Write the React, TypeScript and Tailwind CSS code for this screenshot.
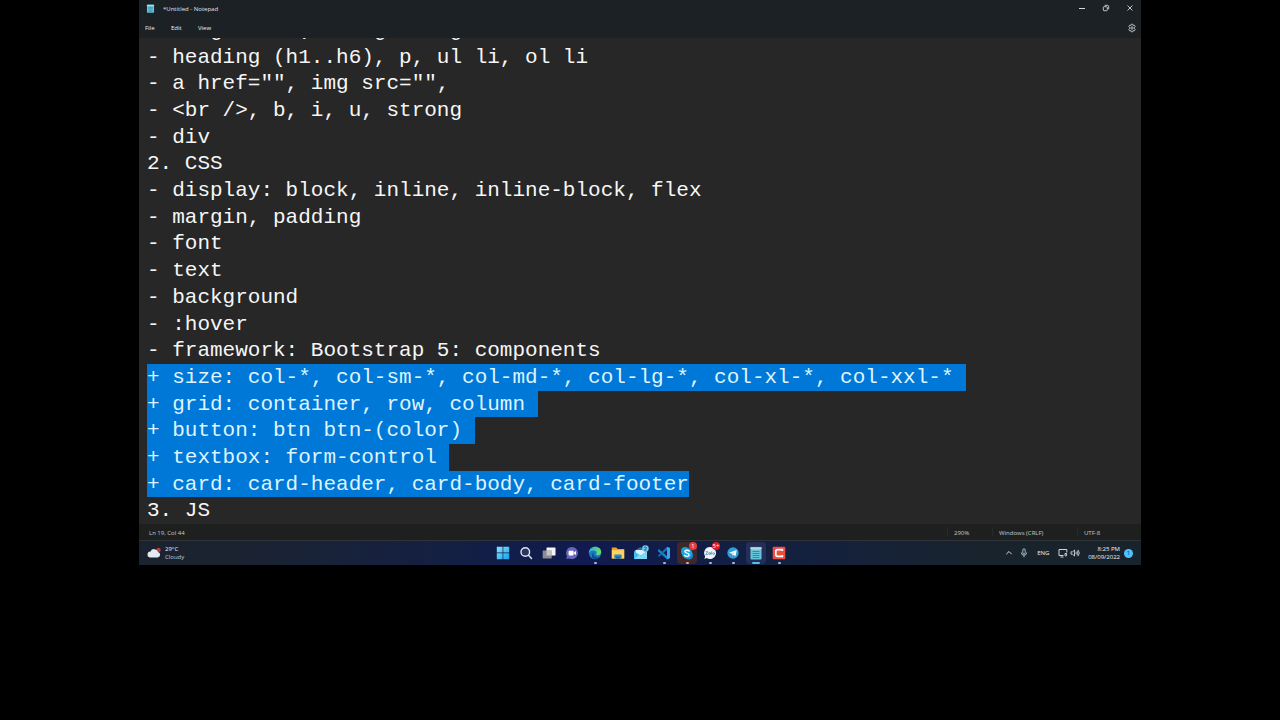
import React from "react";

type Line = { text: string; selected?: boolean; trailing?: boolean };

const lines: Line[] = [
  { text: "- <tag /> hoặc <tag></tag>" },
  { text: "- heading (h1..h6), p, ul li, ol li" },
  { text: '- a href="", img src="",' },
  { text: "- <br />, b, i, u, strong" },
  { text: "- div" },
  { text: "2. CSS" },
  { text: "- display: block, inline, inline-block, flex" },
  { text: "- margin, padding" },
  { text: "- font" },
  { text: "- text" },
  { text: "- background" },
  { text: "- :hover" },
  { text: "- framework: Bootstrap 5: components" },
  { text: "+ size: col-*, col-sm-*, col-md-*, col-lg-*, col-xl-*, col-xxl-*", selected: true, trailing: true },
  { text: "+ grid: container, row, column", selected: true, trailing: true },
  { text: "+ button: btn btn-(color)", selected: true, trailing: true },
  { text: "+ textbox: form-control", selected: true, trailing: true },
  { text: "+ card: card-header, card-body, card-footer", selected: true },
  { text: "3. JS" },
];

function NotepadIcon({ className }: { className: string }) {
  return (
    <svg viewBox="0 0 14 14" className={className} aria-hidden="true">
      <rect x="1.5" y="1" width="11" height="12.5" rx="1" fill="#67c5dc" />
      <rect x="1.5" y="1" width="11" height="2.2" rx="0.8" fill="#d9eef2" />
      <path d="M3.5 5.5h7M3.5 7.5h7M3.5 9.5h7M3.5 11.5h7" stroke="#247e9a" strokeWidth="0.8" />
      <path d="M3 .5v2M5 .5v2M7 .5v2M9 .5v2M11 .5v2" stroke="#367789" strokeWidth="0.7" />
    </svg>
  );
}

function WindowsIcon() {
  return (
    <svg viewBox="0 0 14 14" className="size-3.5" aria-hidden="true">
      <defs>
        <linearGradient id="win" x1="0" y1="0" x2="1" y2="1">
          <stop stopColor="#88e4ff" />
          <stop offset="1" stopColor="#14a2ed" />
        </linearGradient>
      </defs>
      <path d="M.8.8h5.8v5.8H.8zM7.3.8h5.9v5.8H7.3zM.8 7.3h5.8v5.9H.8zM7.3 7.3h5.9v5.9H7.3z" fill="url(#win)" />
    </svg>
  );
}

function SearchIcon() {
  return (
    <svg viewBox="0 0 14 14" className="size-3.5" fill="none" aria-hidden="true">
      <circle cx="6.3" cy="6" r="4.3" fill="#29375f" stroke="#dfe6ef" strokeWidth="1.4" />
      <path d="m9.5 9.3 3 3.1" stroke="#dfe6ef" strokeWidth="1.5" strokeLinecap="round" />
    </svg>
  );
}

function TaskViewIcon() {
  return (
    <svg viewBox="0 0 14 14" className="size-3.5" aria-hidden="true">
      <rect x="4.5" y="1.5" width="9" height="8" rx=".5" fill="#f5f5f4" />
      <rect x=".7" y="4.5" width="9" height="8" rx=".5" fill="#8b8c92" />
      <path d="M4.5 4.5h5.2v5H4.5z" fill="#c3c3c5" />
    </svg>
  );
}

function ChatIcon() {
  return (
    <svg viewBox="0 0 14 14" className="size-3.5" aria-hidden="true">
      <path d="M7 1a6 6 0 1 1-2.7 11.4L1.2 13l.8-2.8A6 6 0 0 1 7 1Z" fill="#6866b8" />
      <rect x="3.6" y="4.7" width="5" height="4.7" rx="1" fill="#fff" />
      <path d="m9 6.4 2-1.3v3.9L9 7.8Z" fill="#fff" />
    </svg>
  );
}

function EdgeIcon() {
  return (
    <svg viewBox="0 0 14 14" className="size-3.5" aria-hidden="true">
      <defs>
        <linearGradient id="edge" x1="0" y1="0" x2="1" y2=".3">
          <stop stopColor="#27a9df" />
          <stop offset="1" stopColor="#6bdc70" />
        </linearGradient>
      </defs>
      <circle cx="7" cy="7" r="6.2" fill="#167cc4" />
      <path d="M.8 7C1.2 3 3.8.8 7.2.8c3.6 0 6 2.5 6 5.2 0 2-1.5 3.2-3.3 3.2-1.5 0-2-.7-1.6-1.4C9.2 6 7.8 4.4 5.4 4.4 3.3 4.4 1.4 5.4.8 7Z" fill="url(#edge)" />
      <path d="M5.4 6.3c-.9 3.7 2.4 5.7 6.1 4.2C10.6 12 9 13.2 7 13.2 3.9 13 2.8 8.4 5.4 6.3Z" fill="#124b91" />
    </svg>
  );
}

function FolderIcon() {
  return (
    <svg viewBox="0 0 14 14" className="size-3.5" aria-hidden="true">
      <path d="M.8 1.5h4.5l1.3 1.5h6.6v9.5H.8Z" fill="#e9a52b" />
      <path d="M.8 4.2h12.4v8.3H.8Z" fill="#ffd262" />
      <path d="M3.3 12.6V9.4q0-1 1-1h5.4q1 0 1 1v3.2Z" fill="#2786cb" />
      <path d="M5 12.6v-1.8h4v1.8Z" fill="#1a5f9e" />
    </svg>
  );
}

function MailIcon() {
  return (
    <svg viewBox="0 0 16 16" className="size-4" aria-hidden="true">
      <path d="m1 6 6.5-4L14 6v8H1Z" fill="#1673b6" />
      <path d="M2.5 5h10v5h-10Z" fill="#d9f4ff" />
      <path d="m1 6.2 6.5 4.2L14 6.2V14H1Z" fill="#40bdf0" />
      <path d="m1 14 5.5-4.4L7.5 10.4 14 6.2V14Z" fill="#7cd9fb" />
      <circle cx="12.4" cy="3.5" r="3.3" fill="#75c9ed" />
      <path d="M11.2 2.7c.2-1.2 2.2-1.1 2.2.1 0 .8-1.2 1.4-2 2.3h2.2" fill="none" stroke="#174765" strokeWidth=".8" />
    </svg>
  );
}

function CodeIcon() {
  return (
    <svg viewBox="0 0 14 14" className="size-3.5" aria-hidden="true">
      <path d="M1 4.1 2 3.3 10 10v3.4L1 5.2Z" fill="#1687d0" />
      <path d="M1 9.8 10 .7V4L2 10.7l-1-.8Z" fill="#1474b8" />
      <path d="m10 .7 3 1.4v9.8l-3 1.5Z" fill="#32a9f0" />
    </svg>
  );
}

function SkypeIcon() {
  return (
    <svg viewBox="0 0 14 14" className="size-3.5" fill="none" aria-hidden="true">
      <circle cx="5" cy="5" r="4" fill="#139bdc" />
      <circle cx="9" cy="9.5" r="4" fill="#1683cc" />
      <circle cx="7" cy="7.3" r="5.2" fill="#18a8df" />
      <path d="M9.2 5.2C8.4 4 5 3.8 4.9 5.6 4.8 7.4 9.3 6.8 9.1 9 9 10.8 5.4 10.7 4.6 9.3" stroke="#fff" strokeWidth="1.4" strokeLinecap="round" />
    </svg>
  );
}

function ZaloIcon() {
  return (
    <svg viewBox="0 0 14 14" className="size-3.5" fill="none" aria-hidden="true">
      <path d="M7 1a6 6 0 1 1-3.3 11L1.3 13l.9-2.6A6 6 0 0 1 7 1Z" fill="#f1f5fb" />
      <path d="M2.7 5.7h2.1L2.7 8.6h2.2M7.4 6.6v2M7.3 7.5a.9.9 0 1 0-1.8 0 .9.9 0 0 0 1.8 0M8.7 5.3v3.4" stroke="#3a78bc" strokeWidth=".7" />
      <circle cx="10.7" cy="7.6" r=".9" stroke="#3a78bc" strokeWidth=".7" />
    </svg>
  );
}

function TelegramIcon() {
  return (
    <svg viewBox="0 0 14 14" className="size-3.5" aria-hidden="true">
      <circle cx="7" cy="7" r="5.7" fill="#2da0d8" />
      <path d="M3 6.8 10.7 4l-1.2 6.3-2.1-1.6-1.2 1-.1-1.9Z" fill="#fff" />
      <path d="m6.1 7.8 3.1-2.5-2.5 2.9-.5 1.5Z" fill="#91bed4" />
    </svg>
  );
}

function CamtasiaIcon() {
  return (
    <svg viewBox="0 0 14 14" className="size-3.5" fill="none" aria-hidden="true">
      <rect x=".7" y=".7" width="12.6" height="12.6" rx="1" fill="#f04b40" />
      <path d="M10.3 5V3.7H5.5Q3.8 3.7 3.8 5.4v3.2q0 1.7 1.7 1.7h4.8V9" stroke="#fff" strokeWidth="1.7" />
    </svg>
  );
}

function Badge({ children, className }: { children: string; className: string }) {
  return (
    <span className={`absolute top-0 right-0 flex h-2 min-w-2 items-center justify-center rounded-full text-[6px] leading-none text-white ${className}`}>
      {children}
    </span>
  );
}

type App = {
  name: string;
  icon: React.ReactNode;
  mark?: string;
  tile?: string;
  badge?: React.ReactNode;
};

const dot = "w-[3px] bg-[#b2b7c8]";

const apps: App[] = [
  { name: "Start", icon: <WindowsIcon /> },
  { name: "Search", icon: <SearchIcon /> },
  { name: "Task view", icon: <TaskViewIcon /> },
  { name: "Chat", icon: <ChatIcon /> },
  { name: "Edge", icon: <EdgeIcon />, mark: dot },
  { name: "File Explorer", icon: <FolderIcon /> },
  { name: "Mail", icon: <MailIcon /> },
  { name: "Visual Studio Code", icon: <CodeIcon />, mark: dot },
  {
    name: "Skype",
    icon: <SkypeIcon />,
    mark: "w-[3px] bg-[#ff9b91]",
    tile: "bg-[#402728]",
    badge: <Badge className="bg-[#e53d3d]">1</Badge>,
  },
  { name: "Zalo", icon: <ZaloIcon />, mark: dot, badge: <Badge className="bg-[#e01c25]">5+</Badge> },
  { name: "Telegram", icon: <TelegramIcon />, mark: dot },
  { name: "Notepad", icon: <NotepadIcon className="size-3.5" />, mark: "w-2 bg-[#59bce9]", tile: "bg-[#232f58]" },
  { name: "Camtasia", icon: <CamtasiaIcon />, mark: dot },
];

function TitleBar() {
  return (
    <header className="flex h-[17px] items-center bg-[#1c2125] pl-[7px]">
      <NotepadIcon className="size-[9px]" />
      <h1 className="pl-2 text-[6px] leading-4 text-[#e2e5e7]">*Untitled - Notepad</h1>
      <div className="ml-auto flex self-start text-[#d5d8da]">
        <button aria-label="Minimize" className="flex h-[15px] w-6 items-center justify-center">
          <svg viewBox="0 0 8 8" className="size-2" stroke="currentColor"><path d="M1 4.5h6" /></svg>
        </button>
        <button aria-label="Restore" className="flex h-[15px] w-6 items-center justify-center">
          <svg viewBox="0 0 8 8" className="size-2" fill="none" stroke="currentColor" strokeWidth=".9">
            <rect x="1.3" y="2.7" width="4" height="4" rx=".8" />
            <path d="M2.7 1.3h2.6q1.4 0 1.4 1.4v2.6" />
          </svg>
        </button>
        <button aria-label="Close" className="flex h-[15px] w-[23px] items-center justify-center">
          <svg viewBox="0 0 8 8" className="size-2" stroke="currentColor" strokeWidth=".9"><path d="m1.5 1.5 5 5m0-5-5 5" /></svg>
        </button>
      </div>
    </header>
  );
}

function MenuBar() {
  return (
    <nav className="flex h-[21px] items-center bg-[#1c2125] pr-1 pl-1.5 text-[6px] leading-2 text-[#f0f1f2]">
      <button className="w-[26px] text-left">File</button>
      <button className="w-[27px] text-left">Edit</button>
      <button>View</button>
      <button aria-label="Settings" className="ml-auto flex size-[10px] items-center justify-center">
        <svg viewBox="0 0 10 10" className="size-[10px]" fill="none" stroke="#c8cccf" strokeWidth=".9">
          <path d="m4.3 1.2h1.4l.4 1.2 1.2-.2.9 1.2-.7 1 .0 1.2.7 1-.9 1.2-1.2-.2-.4 1.2H4.3l-.4-1.2-1.2.2-.9-1.2.7-1V4.4l-.7-1 .9-1.2 1.2.2Z" />
          <circle cx="5" cy="5" r="1.2" />
        </svg>
      </button>
    </nav>
  );
}

function Editor() {
  return (
    <div
      role="textbox"
      aria-multiline="true"
      aria-label="Document text"
      tabIndex={0}
      className="flex h-[486px] flex-col justify-end overflow-hidden bg-[#272727] pl-2 font-['Liberation_Mono',monospace] text-[21px] leading-7 text-[#f6f6f6]"
    >
      <div className="grid h-[507px] shrink-0 auto-rows-[minmax(0,1fr)] justify-items-start">
        {lines.map((line) => (
          <div
            key={line.text}
            className={line.selected ? "bg-[#0078d7] whitespace-pre text-[#def4ff]" : "whitespace-pre"}
          >
            {line.text}
            {line.trailing ? " " : ""}
          </div>
        ))}
      </div>
    </div>
  );
}

function StatusBar() {
  return (
    <footer className="flex h-[17px] items-center border-b border-[#303438] bg-[#1e2020] text-[6px] leading-2 text-[#c8cacb]">
      <span className="pt-0.5 pl-2.5">Ln 19, Col 44</span>
      <span className="ml-auto w-[45px] border-l border-[#282a2a] pt-0.5 pl-1.5">290%</span>
      <span className="w-[85px] border-l border-[#282a2a] pt-0.5 pl-1.5">Windows (CRLF)</span>
      <span className="w-16 border-l border-[#282a2a] pt-0.5 pl-1.5">UTF-8</span>
    </footer>
  );
}

function Taskbar() {
  return (
    <div className="grid h-6 grid-cols-[1fr_auto_1fr] items-center bg-linear-to-r from-[#1b2330] from-10% via-[#101a50] via-45% to-[#19232c] to-85% text-[6px] text-[#f0f2f5]">
      <button className="flex items-center gap-1 justify-self-start pl-2 text-left">
        <svg viewBox="0 0 14 12" className="h-3 w-3.5" aria-hidden="true">
          <circle cx="11.5" cy="3" r="2.2" fill="#c33d35" />
          <path d="M3.5 10.5a3 3 0 0 1 0-6A4 4 0 0 1 11 5a2.8 2.8 0 0 1-.3 5.5Z" fill="#e3e9f5" />
        </svg>
        <span className="leading-2">
          29°C
          <br />
          <span className="text-[#c3c8d0]">Cloudy</span>
        </span>
      </button>
      <div className="flex pl-0.5">
        {apps.map((app) => (
          <button key={app.name} aria-label={app.name} className="flex h-6 w-[23px] items-center justify-center">
            <span className={`relative flex h-[22px] w-5 items-center justify-center rounded-sm ${app.tile ?? ""}`}>
              {app.icon}
              {app.badge}
              {app.mark && (
                <span className="absolute inset-x-0 bottom-0 flex justify-center">
                  <span className={`h-0.5 rounded-full ${app.mark}`} />
                </span>
              )}
            </span>
          </button>
        ))}
      </div>
      <div className="flex items-center justify-self-end pr-2">
        <svg viewBox="0 0 8 8" className="size-2" fill="none" stroke="#e5e8ec" strokeWidth=".9"><path d="m1.3 5.2 2.7-2.7 2.7 2.7" /></svg>
        <svg viewBox="0 0 8 10" className="ml-[7px] h-2.5 w-2" fill="none" stroke="#a8ccd2" strokeWidth=".9">
          <rect x="2.8" y=".8" width="2.4" height="5.2" rx="1.2" />
          <path d="M1.3 4.5Q1.5 7.3 4 7.3t2.7-2.8M4 7.3v2" />
        </svg>
        <span className="ml-[9px] w-[21px]">ENG</span>
        <svg viewBox="0 0 10 10" className="size-2.5" fill="none" stroke="#e5e8ec" strokeWidth=".9">
          <path d="M5.5 7.5H1v-6h7.8v3M2.5 9h3M7 5.5v1.7q0 .8.8.8t.8-.8V5.5Z" />
        </svg>
        <svg viewBox="0 0 10 10" className="ml-0.5 size-2.5" fill="none" stroke="#e5e8ec" strokeWidth=".8">
          <path d="M1 3.8h1.5L4.5 2v6l-2-1.8H1ZM5.8 3.8q1 1.2 0 2.4M7 2.8q1.8 2.2 0 4.4M8 1.8q2.6 3.2 0 6.4" />
        </svg>
        <span className="ml-2 text-right leading-2">
          8:25 PM
          <br />
          08/09/2022
        </span>
        <span className="ml-1 flex size-[9px] items-center justify-center rounded-full bg-[#4cc2ff] text-[6px] leading-none text-[#153a52]">1</span>
      </div>
    </div>
  );
}

export default function App() {
  return (
    <main className="min-h-screen bg-black px-[139px] font-['Open_Sans',sans-serif]">
      <TitleBar />
      <MenuBar />
      <Editor />
      <StatusBar />
      <Taskbar />
    </main>
  );
}
